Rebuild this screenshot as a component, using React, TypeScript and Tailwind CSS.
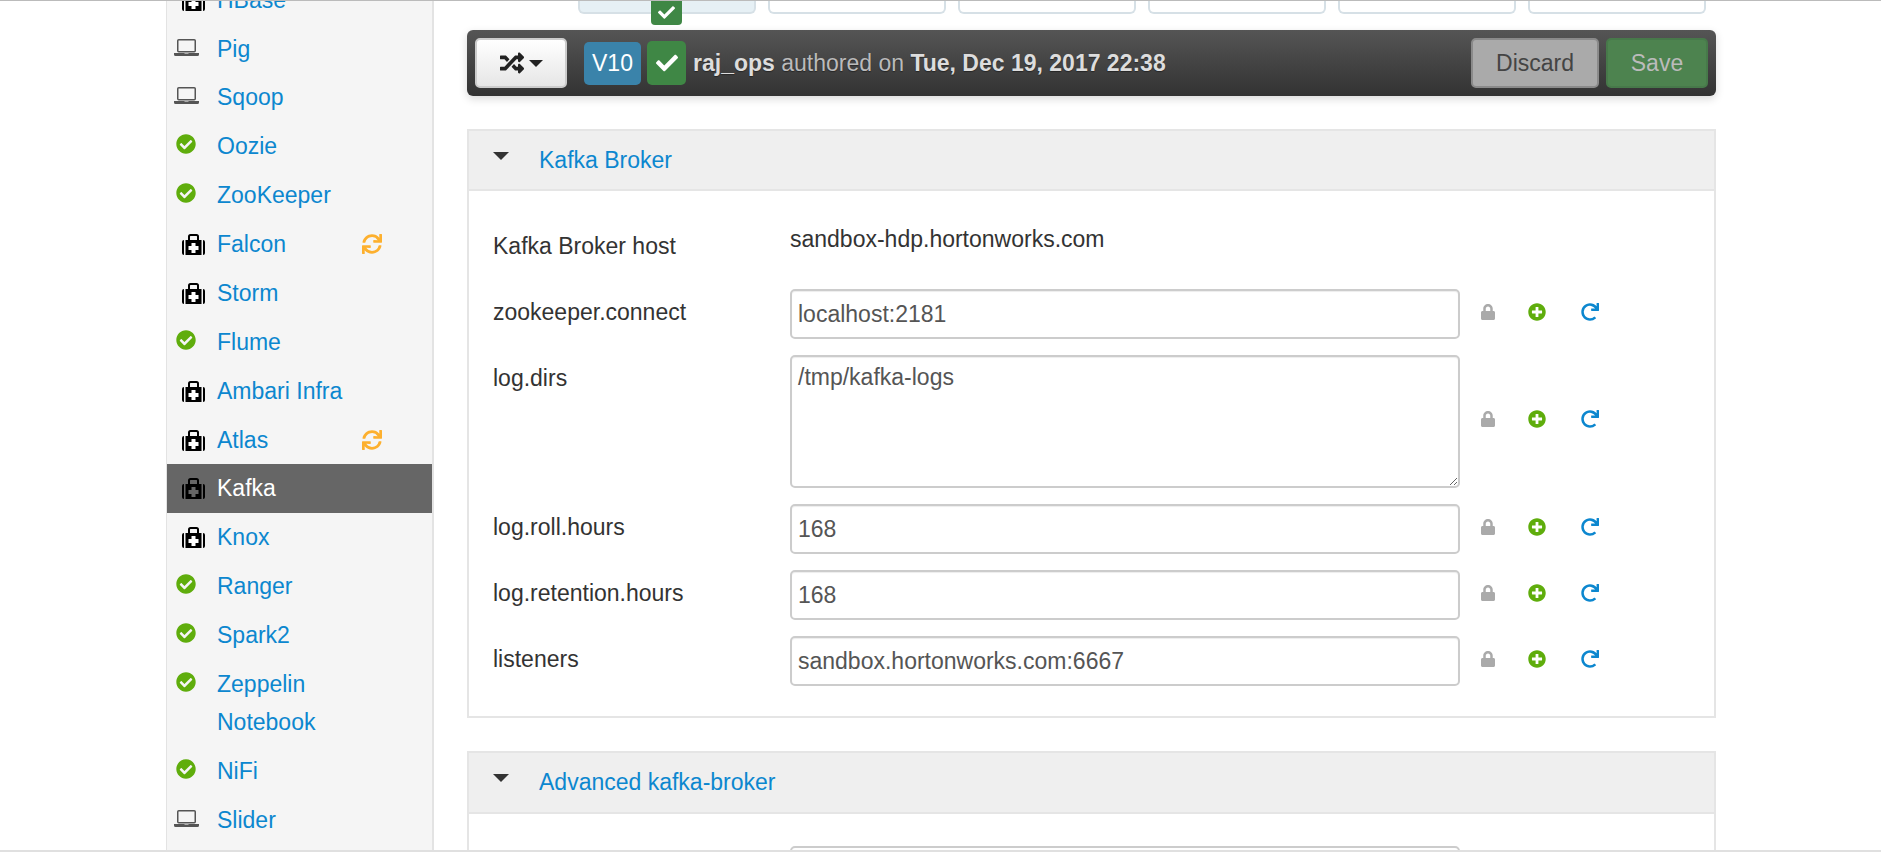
import React from 'react';
import { FaCheck, FaCheckCircle, FaLock, FaPlusCircle, FaRandom, FaRedo, FaSync } from 'react-icons/fa';

type Status = 'kit' | 'ok' | 'laptop';

const services: { name: string; status: Status; busy?: boolean; active?: boolean }[] = [
  { name: 'HBase', status: 'kit' },
  { name: 'Pig', status: 'laptop' },
  { name: 'Sqoop', status: 'laptop' },
  { name: 'Oozie', status: 'ok' },
  { name: 'ZooKeeper', status: 'ok' },
  { name: 'Falcon', status: 'kit', busy: true },
  { name: 'Storm', status: 'kit' },
  { name: 'Flume', status: 'ok' },
  { name: 'Ambari Infra', status: 'kit' },
  { name: 'Atlas', status: 'kit', busy: true },
  { name: 'Kafka', status: 'kit', active: true },
  { name: 'Knox', status: 'kit' },
  { name: 'Ranger', status: 'ok' },
  { name: 'Spark2', status: 'ok' },
  { name: 'Zeppelin Notebook', status: 'ok' },
  { name: 'NiFi', status: 'ok' },
  { name: 'Slider', status: 'laptop' },
];

const MedkitIcon: React.FC = () => (
  <svg viewBox="0 0 23 21" className="ml-[15px] mt-[9px] h-[21px] w-[23px]">
    <path d="M7 6V2.5A1.5 1.5 0 0 1 8.5 1h6A1.5 1.5 0 0 1 16 2.5V6" fill="none" stroke="#000" strokeWidth="2" />
    <path d="M0 8a2 2 0 0 1 2-2v15a2 2 0 0 1-2-2z" fill="#000" />
    <path d="M23 8a2 2 0 0 0-2-2v15a2 2 0 0 0 2-2z" fill="#000" />
    <rect x="3.5" y="6" width="16" height="15" fill="#000" />
    <path d="M9.5 9h4v3h3v4h-3v3h-4v-3h-3v-4h3z" fill="currentColor" />
  </svg>
);

const LaptopIcon: React.FC = () => (
  <svg viewBox="0 0 25 17" className="ml-[7px] mt-[9px] h-[17px] w-[25px]">
    <rect x="3.75" y="0.75" width="17.5" height="12" rx="1" fill="none" stroke="#555" strokeWidth="1.5" />
    <path d="M0 14h25v1.5a1.5 1.5 0 0 1-1.5 1.5h-22A1.5 1.5 0 0 1 0 15.5z" fill="#555" />
    <rect x="10.5" y="14" width="4" height="1" fill="#aaa" />
  </svg>
);

const StatusIcon: React.FC<{ status: Status; active?: boolean }> = ({ status, active }) => {
  if (status === 'ok') return <FaCheckCircle className="ml-[9px] mt-[7px] text-[20px] text-[#5fad0c]" />;
  if (status === 'laptop') return <LaptopIcon />;
  return (
    <span className={active ? 'text-[#666]' : 'text-white'}>
      <MedkitIcon />
    </span>
  );
};

const Sidebar: React.FC = () => (
  <aside className="ml-[166px] w-[268px] shrink-0 border-r-2 border-l border-[#e3e3e3] bg-[#f5f5f5] -mt-[24.5px] mb-[-24px]">
    {services.map((s) => (
      <div
        key={s.name}
        className={`flex items-start py-[5.2px] text-[23px] leading-[38.5px] ${s.active ? 'bg-[#666] text-white' : 'text-[#0c87cf]'}`}
      >
        <div className="w-[50px] shrink-0">
          <StatusIcon status={s.status} active={s.active} />
        </div>
        <span className="w-[145px] shrink-0">{s.name}</span>
        {s.busy && <FaSync className="mt-[9px] text-[20px] text-[#fdb02e]" />}
      </div>
    ))}
  </aside>
);

const Toolbar: React.FC = () => (
  <div className="mt-[16px] flex h-[66px] items-center rounded-[6px] bg-gradient-to-b from-[#555] to-[#333] px-[8px] shadow-[0_3px_8px_rgba(0,0,0,0.15)]">
    <button className="flex h-[50px] w-[92px] items-center justify-center gap-[5px] rounded-[5px] border-2 border-[#ccc] bg-gradient-to-b from-white to-[#e6e6e6] text-[#222]">
      <FaRandom className="text-[24px]" />
      <span className="h-0 w-0 border-x-[7px] border-t-[7px] border-x-transparent border-t-[#222]" />
    </button>
    <span className="ml-[17px] flex h-[43px] w-[57px] items-center justify-center rounded-[5px] bg-[#3a83aa] text-[23px] text-white">V10</span>
    <span className="ml-[6px] flex h-[44px] w-[39px] items-center justify-center rounded-[5px] bg-[#3f8745] text-white">
      <FaCheck className="text-[22px]" />
    </span>
    <span className="ml-[7px] text-[23px] text-[#bbb] [text-shadow:0_1px_1px_rgba(0,0,0,0.4)]">
      <b className="text-[#ddd]">raj_ops</b> authored on <b className="text-[#ddd]">Tue, Dec 19, 2017 22:38</b>
    </span>
    <button className="ml-auto h-[50px] w-[128px] rounded-[5px] border-2 border-[#8a8a8a] bg-[#aaa] text-[23px] text-[#444]">Discard</button>
    <button className="ml-[7px] h-[50px] w-[102px] rounded-[5px] border-2 border-[#47794a] bg-[#4d834f] text-[23px] text-[#bbb]">Save</button>
  </div>
);

const PanelHeader: React.FC<{ title: string; className?: string }> = ({ title, className = 'h-[60px]' }) => (
  <div className={`flex items-center border-b-2 border-[#e5e5e5] bg-[#efefef] pl-[24px] text-[23px] text-[#0c87cf] ${className}`}>
    <span className="mb-[9px] h-0 w-0 border-x-[8px] border-t-[8px] border-x-transparent border-t-[#333]" />
    <span className="ml-[30px]">{title}</span>
  </div>
);

const RowIcons: React.FC = () => (
  <div className="mb-[5px] ml-[20px] flex items-center">
    <FaLock className="text-[16px] text-[#aaa]" />
    <FaPlusCircle className="ml-[32px] text-[18px] text-[#5fad0c]" />
    <FaRedo className="ml-[35px] text-[18px] text-[#0c87cf]" />
  </div>
);

const fields = [
  { label: 'zookeeper.connect', value: 'localhost:2181' },
  { label: 'log.dirs', value: '/tmp/kafka-logs', multi: true },
  { label: 'log.roll.hours', value: '168' },
  { label: 'log.retention.hours', value: '168' },
  { label: 'listeners', value: 'sandbox.hortonworks.com:6667' },
];

const inputClass =
  'w-[670px] rounded-[5px] border-2 border-[#ccc] bg-white px-[6px] text-[23px] text-[#555] shadow-[inset_0_1px_1px_rgba(0,0,0,0.075)] outline-none';

const KafkaBroker: React.FC = () => (
  <section className="mt-[33px] h-[589px] border-2 border-[#e5e5e5]">
    <PanelHeader title="Kafka Broker" />
    <div className="px-[24px] pt-[29px] text-[23px] leading-[38.5px] text-[#333]">
      <div className="flex h-[69px] items-start">
        <span className="mt-[7px] w-[297px]">Kafka Broker host</span>
        <span>sandbox-hdp.hortonworks.com</span>
      </div>
      {fields.map((f) => (
        <div key={f.label} className="mb-[16px] flex items-stretch">
          <span className="w-[297px] shrink-0 pt-[4px]">{f.label}</span>
          {f.multi ? (
            <textarea readOnly defaultValue={f.value} className={`${inputClass} h-[133px] pt-[1px]`} />
          ) : (
            <input readOnly defaultValue={f.value} className={`${inputClass} h-[50px]`} />
          )}
          <RowIcons />
        </div>
      ))}
    </div>
  </section>
);

export default function App() {
  return (
    <div className="relative flex h-[852px] overflow-hidden bg-white font-['Liberation_Sans',Arial,sans-serif]">
      <Sidebar />
      <main className="ml-[33px] w-[1249px] shrink-0">
        <div className="flex h-[14px] gap-[12px] pl-[111px]">
          {[0, 1, 2, 3, 4, 5].map((i) => (
            <div
              key={i}
              className={`relative w-[178px] rounded-b-[6px] border-x-2 border-b-2 border-[#d6e0e6] ${i === 0 ? 'bg-[#e6f0f5]' : 'bg-white'}`}
            >
              {i === 0 && (
                <span className="absolute left-[71px] top-0 flex h-[25px] w-[31px] items-center justify-center rounded-b-[4px] bg-[#3f8745] text-white">
                  <FaCheck className="text-[17px]" />
                </span>
              )}
            </div>
          ))}
        </div>
        <Toolbar />
        <KafkaBroker />
        <section className="mt-[33px] border-2 border-[#e5e5e5]">
          <PanelHeader title="Advanced kafka-broker" className="h-[61px]" />
          <div className="pl-[321px] pt-[32px]">
            <div className="h-[50px] w-[670px] rounded-[5px] border-2 border-[#ccc]" />
          </div>
        </section>
      </main>
      <div className="absolute inset-x-0 top-0 h-px bg-[#bbb]" />
      <div className="absolute inset-x-0 bottom-0 h-[2px] bg-[#e0e0e0]" />
    </div>
  );
}
